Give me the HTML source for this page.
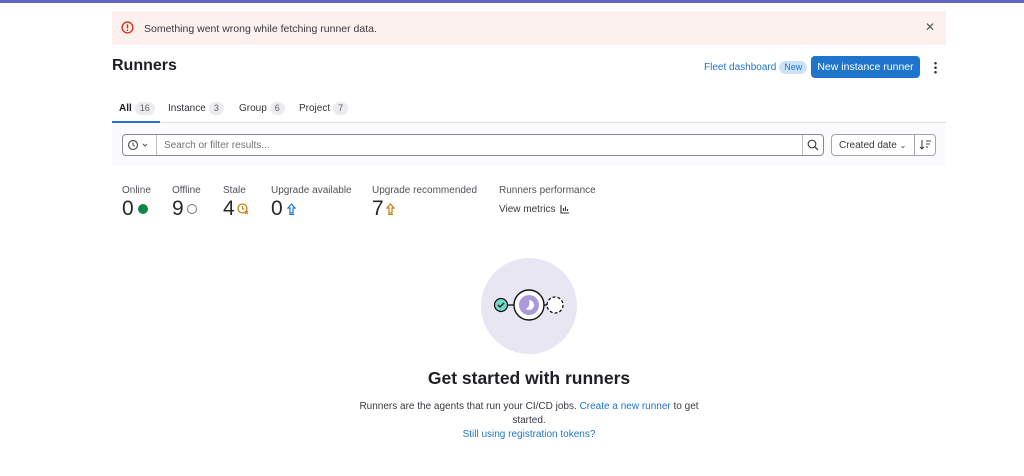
<!DOCTYPE html>
<html><head><style>
*{box-sizing:border-box;margin:0;padding:0}
body{width:1024px;height:476px;background:#fff;font-family:"Liberation Sans",sans-serif;color:#333238;position:relative;overflow:hidden;font-size:10px}
.abs{position:absolute}
a{color:#1f75cb;text-decoration:none}
.badge{display:inline-block;background:#ececef;color:#626168;border-radius:8px;font-size:9px;padding:1px 5px;margin-left:3px;line-height:11px}
.lbl{font-size:10px;color:#535158}
.num{font-size:21px;color:#28272d;line-height:22px}
</style></head><body>
<div class="abs" style="left:0;top:0;width:1024px;height:3px;background:#6466c4"></div>
<div class="abs" style="left:112px;top:11px;width:834px;height:34px;background:#fcf1ef"></div>
<svg class="abs" style="left:121px;top:21px" width="13" height="13" viewBox="0 0 14 14"><circle cx="7" cy="7" r="5.8" fill="none" stroke="#dd2b0e" stroke-width="1.5"/><rect x="6.2" y="3.6" width="1.6" height="4.4" fill="#dd2b0e"/><circle cx="7" cy="10" r="0.9" fill="#dd2b0e"/></svg>
<div class="abs" style="left:144px;top:23px;font-size:10.5px;color:#3a383f">Something went wrong while fetching runner data.</div>
<div class="abs" style="left:925px;top:20px;font-size:12px;color:#555">✕</div>
<div class="abs" style="left:112px;top:57px;font-size:16px;font-weight:bold;color:#1f1e24">Runners</div>
<div class="abs" style="left:704px;top:61px;font-size:10px"><a>Fleet dashboard</a><span class="badge" style="background:#cbe2f9;color:#1f75cb">New</span></div>
<div class="abs" style="left:811px;top:56px;width:109px;height:22px;background:#1f75cb;border-radius:4px;color:#fff;font-size:10.5px;text-align:center;line-height:22px">New instance runner</div>
<div class="abs" style="left:934px;top:61px;width:3px;height:13px;background:radial-gradient(circle,#333 1.2px,transparent 1.4px) 0 0/3px 4.5px"></div>
<div class="abs" style="left:119px;top:102px;font-size:10px"><b style="font-weight:600;color:#1f1e24">All</b><span class="badge">16</span></div>
<div class="abs" style="left:168px;top:102px;font-size:10px">Instance<span class="badge">3</span></div>
<div class="abs" style="left:239px;top:102px;font-size:10px">Group<span class="badge">6</span></div>
<div class="abs" style="left:299px;top:102px;font-size:10px">Project<span class="badge">7</span></div>
<div class="abs" style="left:112px;top:122px;width:834px;height:1px;background:#dcdcde"></div>
<div class="abs" style="left:112px;top:121px;width:48px;height:2px;background:#1f75cb"></div>
<div class="abs" style="left:112px;top:124px;width:834px;height:42px;background:#fbfafd"></div>
<div class="abs" style="left:122px;top:134px;width:702px;height:22px;border:1px solid #89888d;border-radius:4px;background:#fff"></div>
<div class="abs" style="left:156px;top:135px;width:1px;height:20px;background:#bfbfc3"></div>
<div class="abs" style="left:802px;top:135px;width:1px;height:20px;background:#bfbfc3"></div>
<svg class="abs" style="left:127px;top:139px" width="24" height="12" viewBox="0 0 24 12"><circle cx="6" cy="6" r="4.5" fill="none" stroke="#555" stroke-width="1.2"/><path d="M6 3.5V6l2 1.3" stroke="#555" fill="none" stroke-width="1.1"/><path d="M16 5l2 2 2-2" stroke="#555" fill="none" stroke-width="1"/></svg>
<div class="abs" style="left:164px;top:140px;font-size:10px;color:#737278">Search or filter results...</div>
<svg class="abs" style="left:807px;top:139px" width="12" height="12" viewBox="0 0 12 12"><circle cx="5" cy="5" r="3.8" fill="none" stroke="#444" stroke-width="1.2"/><path d="M8 8l3 3" stroke="#444" stroke-width="1.3"/></svg>
<div class="abs" style="left:831px;top:134px;width:105px;height:22px;border:1px solid #a4a3a8;border-radius:4px;background:#fff"></div>
<div class="abs" style="left:914px;top:135px;width:1px;height:20px;background:#a4a3a8"></div>
<div class="abs" style="left:839px;top:140px;font-size:10px;color:#3a383f">Created date <span style="font-size:8px">⌄</span></div>
<svg class="abs" style="left:919px;top:139px" width="13" height="12" viewBox="0 0 13 12"><path d="M3 1v9M1 8l2 2 2-2M7 2h5M7 5h4M7 8h2" stroke="#444" fill="none" stroke-width="1.1"/></svg>
<div class="abs lbl" style="left:122px;top:185px">Online</div>
<div class="abs lbl" style="left:172px;top:185px">Offline</div>
<div class="abs lbl" style="left:223px;top:185px">Stale</div>
<div class="abs lbl" style="left:271px;top:185px">Upgrade available</div>
<div class="abs lbl" style="left:372px;top:185px">Upgrade recommended</div>
<div class="abs lbl" style="left:499px;top:185px">Runners performance</div>
<div class="abs num" style="left:122px;top:198px">0</div>
<div class="abs" style="left:138px;top:204px;width:10px;height:10px;border-radius:50%;background:#108548"></div>
<div class="abs num" style="left:172px;top:198px">9</div>
<div class="abs" style="left:187px;top:204px;width:10px;height:10px;border-radius:50%;border:1.5px solid #737278"></div>
<div class="abs num" style="left:223px;top:198px">4</div>
<svg class="abs" style="left:237px;top:203px" width="12" height="12" viewBox="0 0 12 12"><circle cx="5.5" cy="5.5" r="4.5" fill="none" stroke="#c17d10" stroke-width="1.2"/><path d="M5.5 3v3h2M8 8l3 3M11 8l-3 3" stroke="#c17d10" fill="none" stroke-width="1.1"/></svg>
<div class="abs num" style="left:271px;top:198px">0</div>
<svg class="abs" style="left:287px;top:203px" width="9" height="12" viewBox="0 0 9 12"><path d="M4.5 1L1 5h2v5h3V5h2z" fill="none" stroke="#1f75cb" stroke-width="1.2"/><path d="M2 11.5h5" stroke="#1f75cb"/></svg>
<div class="abs num" style="left:372px;top:198px">7</div>
<svg class="abs" style="left:386px;top:203px" width="9" height="12" viewBox="0 0 9 12"><path d="M4.5 1L1 5h2v5h3V5h2z" fill="none" stroke="#c17d10" stroke-width="1.2"/><path d="M2 11.5h5" stroke="#c17d10"/></svg>
<div class="abs" style="left:499px;top:204px;font-size:10px;color:#3a383f">View metrics</div>
<svg class="abs" style="left:560px;top:204px" width="10" height="10" viewBox="0 0 10 10"><path d="M1 1v8h8M3.5 7V4M5.5 7V2.5M7.5 7V5" stroke="#333" fill="none" stroke-width="1.1"/></svg>
<svg class="abs" style="left:480px;top:257px" width="98" height="98" viewBox="0 0 98 98">
<circle cx="49" cy="49" r="48" fill="#e9e6f3"/>
<line x1="28" y1="48" x2="34" y2="48" stroke="#111" stroke-width="1.3"/>
<line x1="64" y1="48" x2="67" y2="48" stroke="#111" stroke-width="1.3"/>
<circle cx="21" cy="48" r="6.5" fill="#6fdac8" stroke="#111" stroke-width="1.2"/>
<path d="M18 48l2 2 4-4" stroke="#111" fill="none" stroke-width="1.3"/>
<circle cx="49" cy="48" r="15" fill="#fff" stroke="#111" stroke-width="1.4"/>
<circle cx="49" cy="48" r="10" fill="#a99bd9"/>
<path d="M49 43a5 5 0 1 1 -3 9c3-2 4-5 3-9z" fill="#fff"/>
<circle cx="75" cy="48" r="8" fill="#fff" stroke="#111" stroke-width="1.3" stroke-dasharray="3 2"/>
</svg>
<div class="abs" style="left:0;width:1058px;top:368px;text-align:center;font-size:17.5px;font-weight:bold;color:#1f1e24">Get started with runners</div>
<div class="abs" style="left:0;width:1058px;top:400px;text-align:center;font-size:10px;line-height:14px;color:#3a383f">Runners are the agents that run your CI/CD jobs. <a>Create a new runner</a> to get<br>started.<br><a>Still using registration tokens?</a></div>
</body></html>
